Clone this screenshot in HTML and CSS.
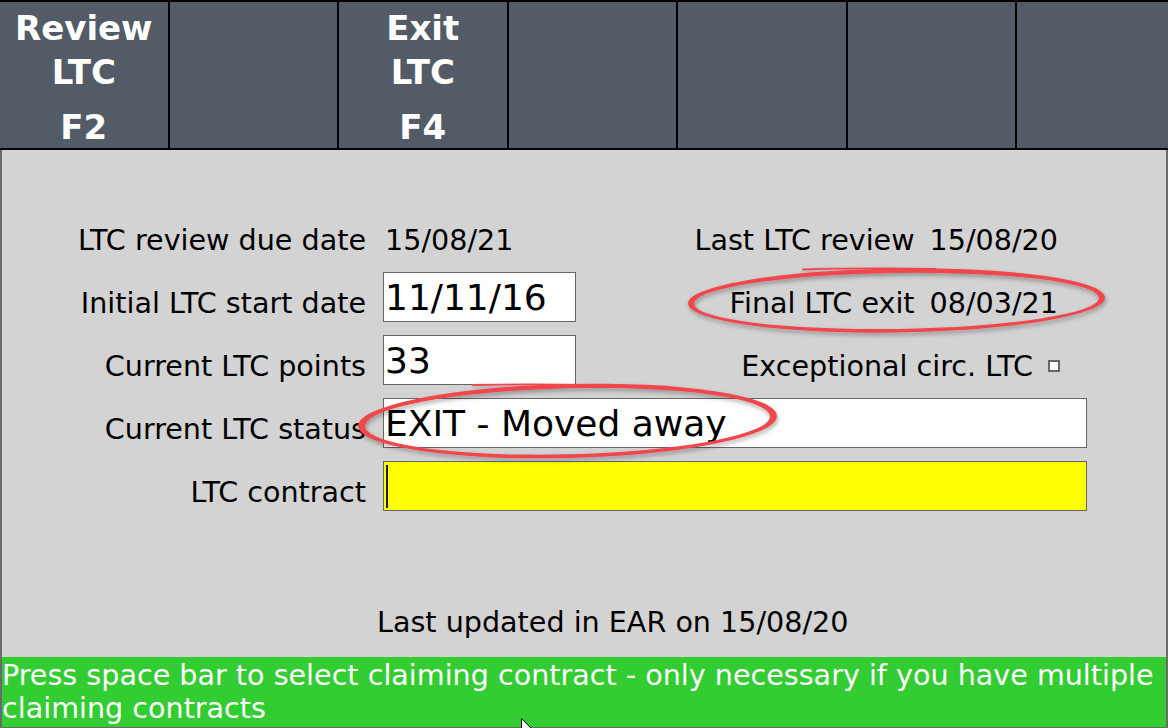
FILE: index.html
```html
<!DOCTYPE html>
<html lang="en">
<head>
<meta charset="utf-8">
<title>LTC</title>
<link rel="stylesheet" href="styles.css">
</head>
<body>
<div class="screen">
  <div class="toolbar">
    <div class="fkey"><div class="fkey-label">Review<br>LTC</div><div class="fkey-code">F2</div></div>
    <div class="fkey"></div>
    <div class="fkey"><div class="fkey-label">Exit<br>LTC</div><div class="fkey-code">F4</div></div>
    <div class="fkey"></div>
    <div class="fkey"></div>
    <div class="fkey"></div>
    <div class="fkey"></div>
  </div>
  <div class="panel">
    <div class="form">
      <div class="label">LTC review due date</div>
      <div class="value">15/08/21</div>
      <div class="side"><span>Last LTC review</span><span class="side-value">15/08/20</span></div>

      <div class="label">Initial LTC start date</div>
      <div class="field">11/11/16</div>
      <div class="side"><span>Final LTC exit</span><span class="side-value">08/03/21</span></div>

      <div class="label">Current LTC points</div>
      <div class="field">33</div>
      <div class="side"><span>Exceptional circ. LTC</span><span class="check"></span></div>

      <div class="label">Current LTC status</div>
      <div class="field wide">EXIT - Moved away</div>

      <div class="label">LTC contract</div>
      <div class="field wide yellow"><span class="caret"></span></div>
    </div>
    <div class="updated">Last updated in EAR on 15/08/20</div>
  </div>
  <div class="hint">Press space bar to select claiming contract - only necessary if you have multiple<br>claiming contracts</div>

  <svg class="annotations" width="1168" height="728" viewBox="0 0 1168 728">
    <defs>
      <filter id="shadow" x="-10%" y="-50%" width="120%" height="200%">
        <feDropShadow dx="1" dy="2.5" stdDeviation="2" flood-color="#000" flood-opacity="0.33"/>
      </filter>
    </defs>
    <g filter="url(#shadow)">
      <g transform="rotate(-0.8 896.5 300.5)">
        <path fill="#f0464d" fill-rule="evenodd" d="M688 300.5 a208.5 32 0 1 0 417 0 a208.5 32 0 1 0 -417 0 Z M694 300.9 a202.5 28 0 1 0 405 0 a202.5 28 0 1 0 -405 0 Z"/>
      </g>
      <path fill="none" stroke="#f0464d" stroke-width="1.8" stroke-linecap="round" d="M803 269.5 Q 860 267.8 935 268.8"/>
      <g transform="rotate(-1.4 567.5 421)">
        <path fill="#f0464d" fill-rule="evenodd" d="M358 421 a209.5 37 0 1 0 419 0 a209.5 37 0 1 0 -419 0 Z M365 421.3 a202.5 33 0 1 0 405 0 a202.5 33 0 1 0 -405 0 Z"/>
      </g>
      <path fill="none" stroke="#f0464d" stroke-width="1.8" stroke-linecap="round" d="M473 385 Q 530 383.5 600 385.3"/>
    </g>
  </svg>

  <svg class="pointer" width="13" height="20" viewBox="0 0 13 20">
    <path d="M0.5 0.5 L0.5 16 L4.3 12.4 L7 18.5 L9.2 17.5 L6.6 11.6 L11.5 11.6 Z" fill="#fff" stroke="#000" stroke-width="1"/>
  </svg>
</div>
</body>
</html>
```

FILE: styles.css
```css
html, body {
  margin: 0;
  padding: 0;
}

body {
  width: 1168px;
  height: 728px;
  overflow: hidden;
  font-family: "DejaVu Sans", Verdana, sans-serif;
}

.screen {
  position: relative;
  width: 1168px;
  height: 728px;
  display: flex;
  flex-direction: column;
  overflow: hidden;
  background: #d3d3d3;
}

/* function key bar */
.toolbar {
  flex: none;
  display: flex;
  height: 150px;
  box-sizing: border-box;
  background: #525b66;
  border-top: 2px solid #000;
  border-bottom: 2px solid #000;
}

.fkey {
  flex: 0 0 169.5px;
  box-sizing: border-box;
  border-right: 2px solid #000;
  padding-top: 4px;
  color: #fff;
  font-weight: bold;
  font-size: 34px;
  line-height: 44px;
  text-align: center;
  white-space: nowrap;
}

.fkey-code {
  margin-top: 11px;
}

/* main panel */
.panel {
  flex: 1;
  display: flex;
  flex-direction: column;
  border-left: 2px solid #6a6a6a;
  border-right: 2px solid #6a6a6a;
  padding-top: 59px;
  font-size: 28.6px;
  color: #000;
}

.form {
  display: grid;
  grid-template-columns: 381px 193px 1fr;
  grid-auto-rows: 50px;
  row-gap: 13px;
}

.label {
  text-align: right;
  padding-right: 17px;
  padding-top: 11px;
  line-height: 40px;
  white-space: nowrap;
}

.value {
  padding-left: 2px;
  padding-top: 11px;
  line-height: 40px;
  white-space: nowrap;
}

.side {
  text-align: right;
  padding-right: 108px;
  padding-top: 11px;
  line-height: 40px;
  white-space: nowrap;
}

.side-value {
  margin-left: 15px;
}

.check {
  display: inline-block;
  width: 12px;
  height: 12px;
  box-sizing: border-box;
  border: 2px solid #666;
  background: #fff;
  margin-left: 15px;
  margin-right: -2px;
  margin-bottom: 4px;
}

.field {
  box-sizing: border-box;
  height: 50px;
  border: 1px solid #666;
  background: #fff;
  padding-left: 1px;
  display: flex;
  align-items: center;
  font-size: 36px;
  white-space: nowrap;
}

.field.wide {
  grid-column: 2 / 4;
  width: 704px;
}

.field.yellow {
  background: #ffff00;
}

.caret {
  width: 2px;
  height: 43px;
  margin-left: 1px;
  background: #1c1c5c;
}

.updated {
  margin-top: auto;
  padding-left: 375px;
  padding-bottom: 18px;
  white-space: nowrap;
}

/* status hint */
.hint {
  flex: none;
  height: 71px;
  box-sizing: border-box;
  background: #33cc33;
  color: #fff;
  font-size: 28.6px;
  line-height: 33px;
  padding-top: 2px;
  border-left: 2px solid #6a6a6a;
  border-right: 2px solid #6a6a6a;
  border-bottom: 1px solid #6a6a6a;
  white-space: nowrap;
  overflow: hidden;
}

/* overlays */
.annotations {
  position: absolute;
  left: 0;
  top: 0;
  pointer-events: none;
}

.pointer {
  position: absolute;
  left: 521px;
  top: 718px;
  pointer-events: none;
}
```
